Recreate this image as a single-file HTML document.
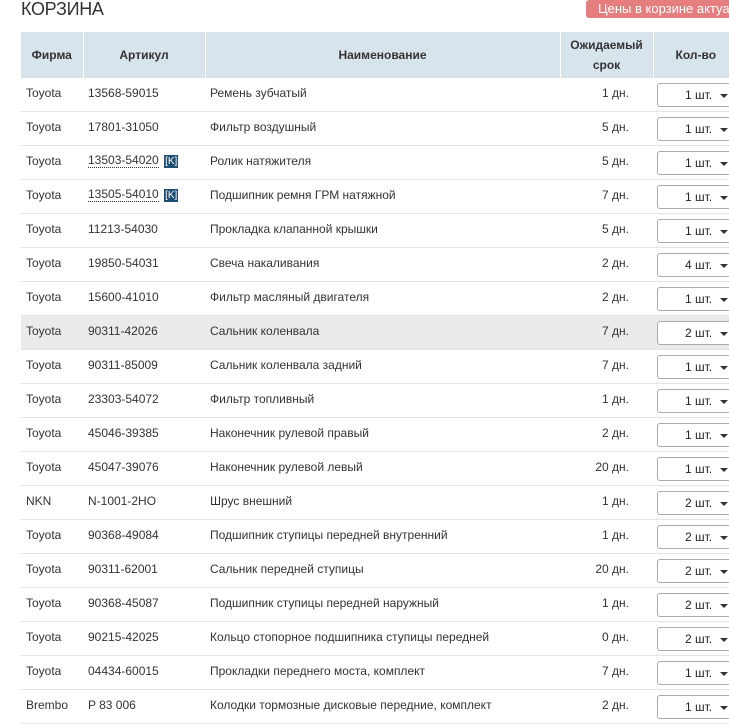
<!DOCTYPE html>
<html><head><meta charset="utf-8"><style>
body{margin:0;width:729px;height:727px;overflow:hidden;background:#fff;font-family:"Liberation Sans",sans-serif;color:#333;position:relative}
h1{position:absolute;left:21px;top:-1px;margin:0;font-weight:normal;font-size:18px;line-height:20px;color:#333;letter-spacing:-0.3px}
.btn{position:absolute;left:586px;top:0;width:160px;height:18px;background:#e57f7f;border-radius:3px;color:#fff;font-size:13px;line-height:17px;padding-left:12px;box-sizing:border-box;white-space:nowrap}
table{position:absolute;left:21px;top:32px;border-collapse:collapse;table-layout:fixed;width:740px;font-size:12px}
th{background:#d8e4ec;font-weight:bold;font-size:12px;color:#333;height:46px;border-right:1px solid #fff;padding:0;text-align:center;line-height:20px}
td{height:29px;border-bottom:1px solid #e3e3e3;padding:0 0 4px 5px;white-space:nowrap}
tr.h td{background:#ebebeb}
td.d{text-align:right;padding-right:24px}
td.q{padding-bottom:0}
.k{display:inline-block;background:#1d4e73;color:#fff;font-size:10px;padding:0 1px;line-height:13px;margin-left:2px}
.u{border-bottom:1px dotted #333}
.s{display:inline-block;margin-left:-1px;width:80px;height:24px;border:1px solid #aaa;border-radius:3px;box-sizing:border-box;position:relative;top:0;font-size:12px;line-height:23px;padding-left:27px;color:#222;background:#fff}
.s:after{content:"";position:absolute;left:62px;top:10px;border-left:4px solid transparent;border-right:4px solid transparent;border-top:4px solid #333}
</style></head><body>
<h1>КОРЗИНА</h1>
<div class="btn">Цены в корзине актуальны</div>
<table>
<colgroup><col style="width:62px"><col style="width:122px"><col style="width:355px"><col style="width:93px"><col style="width:108px"></colgroup>
<tr><th>Фирма</th><th>Артикул</th><th>Наименование</th><th>Ожидаемый<br>срок</th><th style="text-align:left;padding-left:22px">Кол-во</th></tr>
<tr><td>Toyota</td><td>13568-59015</td><td>Ремень зубчатый</td><td class="d">1 дн.</td><td class="q"><span class="s">1 шт.</span></td></tr>
<tr><td>Toyota</td><td>17801-31050</td><td>Фильтр воздушный</td><td class="d">5 дн.</td><td class="q"><span class="s">1 шт.</span></td></tr>
<tr><td>Toyota</td><td><span class="u">13503-54020</span> <span class="k">[K]</span></td><td>Ролик натяжителя</td><td class="d">5 дн.</td><td class="q"><span class="s">1 шт.</span></td></tr>
<tr><td>Toyota</td><td><span class="u">13505-54010</span> <span class="k">[K]</span></td><td>Подшипник ремня ГРМ натяжной</td><td class="d">7 дн.</td><td class="q"><span class="s">1 шт.</span></td></tr>
<tr><td>Toyota</td><td>11213-54030</td><td>Прокладка клапанной крышки</td><td class="d">5 дн.</td><td class="q"><span class="s">1 шт.</span></td></tr>
<tr><td>Toyota</td><td>19850-54031</td><td>Свеча накаливания</td><td class="d">2 дн.</td><td class="q"><span class="s">4 шт.</span></td></tr>
<tr><td>Toyota</td><td>15600-41010</td><td>Фильтр масляный двигателя</td><td class="d">2 дн.</td><td class="q"><span class="s">1 шт.</span></td></tr>
<tr class="h"><td>Toyota</td><td>90311-42026</td><td>Сальник коленвала</td><td class="d">7 дн.</td><td class="q"><span class="s">2 шт.</span></td></tr>
<tr><td>Toyota</td><td>90311-85009</td><td>Сальник коленвала задний</td><td class="d">7 дн.</td><td class="q"><span class="s">1 шт.</span></td></tr>
<tr><td>Toyota</td><td>23303-54072</td><td>Фильтр топливный</td><td class="d">1 дн.</td><td class="q"><span class="s">1 шт.</span></td></tr>
<tr><td>Toyota</td><td>45046-39385</td><td>Наконечник рулевой правый</td><td class="d">2 дн.</td><td class="q"><span class="s">1 шт.</span></td></tr>
<tr><td>Toyota</td><td>45047-39076</td><td>Наконечник рулевой левый</td><td class="d">20 дн.</td><td class="q"><span class="s">1 шт.</span></td></tr>
<tr><td>NKN</td><td>N-1001-2HO</td><td>Шрус внешний</td><td class="d">1 дн.</td><td class="q"><span class="s">2 шт.</span></td></tr>
<tr><td>Toyota</td><td>90368-49084</td><td>Подшипник ступицы передней внутренний</td><td class="d">1 дн.</td><td class="q"><span class="s">2 шт.</span></td></tr>
<tr><td>Toyota</td><td>90311-62001</td><td>Сальник передней ступицы</td><td class="d">20 дн.</td><td class="q"><span class="s">2 шт.</span></td></tr>
<tr><td>Toyota</td><td>90368-45087</td><td>Подшипник ступицы передней наружный</td><td class="d">1 дн.</td><td class="q"><span class="s">2 шт.</span></td></tr>
<tr><td>Toyota</td><td>90215-42025</td><td>Кольцо стопорное подшипника ступицы передней</td><td class="d">0 дн.</td><td class="q"><span class="s">2 шт.</span></td></tr>
<tr><td>Toyota</td><td>04434-60015</td><td>Прокладки переднего моста, комплект</td><td class="d">7 дн.</td><td class="q"><span class="s">1 шт.</span></td></tr>
<tr><td>Brembo</td><td>P 83 006</td><td>Колодки тормозные дисковые передние, комплект</td><td class="d">2 дн.</td><td class="q"><span class="s">1 шт.</span></td></tr>
</table>
</body></html>
